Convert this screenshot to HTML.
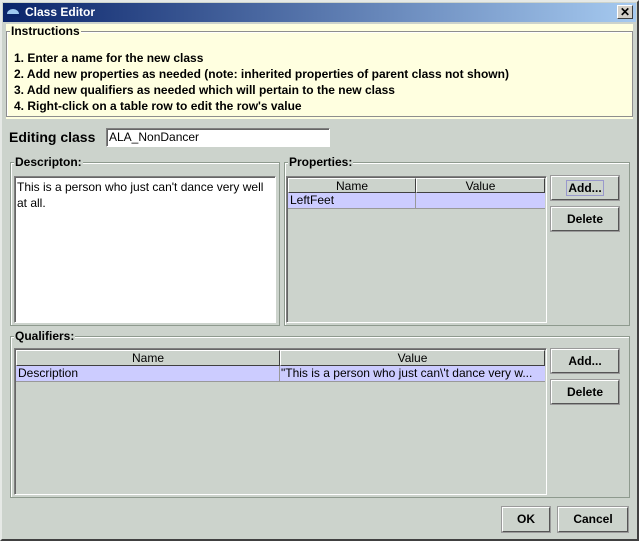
<!DOCTYPE html>
<html><head><style>
*{box-sizing:border-box;margin:0;padding:0}
body{width:639px;height:541px;overflow:hidden;background:#ccd3cc;font-family:"Liberation Sans",sans-serif;font-size:12px;color:#000;position:relative}
.a{position:absolute}
.win{left:0;top:0;width:639px;height:541px;border:2px solid;border-color:#e6e9e6 #404040 #404040 #e6e9e6}
.title{left:3px;top:3px;width:633px;height:19px;background:linear-gradient(90deg,#0a246a,#a6caf0);color:#fff;font-weight:bold;font-size:12px;line-height:19px;padding-left:22px}
.close{left:617px;top:5px;width:16px;height:14px;background:#d4d0c8;border:1px solid;border-color:#fff #404040 #404040 #fff;font-size:12px;line-height:12px;text-align:center;font-weight:bold;color:#000}
.instr{left:6px;top:24px;width:627px;height:95px;background:#ffffe0}
.grp{border:1px solid #8e9a8e;box-shadow:inset 1px 1px 0 #fff}
.gt{background:inherit;font-weight:bold;font-size:12px;padding:0 1px;line-height:13px}
.b{font-weight:bold;font-size:12px}
.white{background:#fff;border:1px solid;border-color:#808080 #fff #fff #808080;box-shadow:inset 1px 1px 0 #666}
.btn{background:#ccd3cc;border:1px solid;border-color:#fff #555 #555 #fff;box-shadow:0 0 0 1px #9a9a9a;font-weight:bold;font-size:12px;text-align:center}
.hd{background:#ccd3cc;border:1px solid;border-color:#fff #404040 #404040 #fff;text-align:center;font-size:12px;line-height:14px}
.row{background:#ccccff;border-bottom:1px solid #999;font-size:12px;line-height:15px;padding-left:2px}
</style></head><body>
<div class="a win"></div>
<div class="a title">Class Editor</div>
<svg class="a" style="left:6px;top:7px" width="14" height="10"><ellipse cx="7" cy="7" rx="6" ry="5" fill="#9ec8f0"/><rect x="0" y="7" width="14" height="3" fill="#0a246a"/></svg>
<div class="a close">✕</div>
<div class="a instr"></div>
<div class="a grp" style="left:6px;top:31px;width:627px;height:86px;border-color:#8e8e8e"></div>
<div class="a gt" style="left:10px;top:25px;background:#ffffe0">Instructions</div>
<div class="a b" style="left:14px;top:50px;line-height:16px">1. Enter a name for the new class<br>2. Add new properties as needed (note: inherited properties of parent class not shown)<br>3. Add new qualifiers as needed which will pertain to the new class<br>4. Right-click on a table row to edit the row's value</div>
<div class="a b" style="left:9px;top:129px;font-size:14px">Editing class</div>
<div class="a white" style="left:106px;top:128px;width:224px;height:19px;padding-left:2px;line-height:17px;font-size:12px">ALA_NonDancer</div>

<div class="a grp" style="left:10px;top:162px;width:270px;height:164px"></div>
<div class="a gt" style="left:14px;top:156px;background:#ccd3cc">Descripton:</div>
<div class="a white" style="left:14px;top:176px;width:262px;height:147px;padding:2px 2px;line-height:16px;font-size:12px">This is a person who just can't dance very well at all.</div>

<div class="a grp" style="left:284px;top:162px;width:346px;height:164px"></div>
<div class="a gt" style="left:288px;top:156px;background:#ccd3cc">Properties:</div>
<div class="a white" style="left:286px;top:176px;width:261px;height:147px;background:#ccd3cc"></div>
<div class="a hd" style="left:288px;top:178px;width:128px;height:15px">Name</div>
<div class="a hd" style="left:416px;top:178px;width:129px;height:15px">Value</div>
<div class="a row" style="left:288px;top:193px;width:257px;height:16px">LeftFeet</div>
<div class="a" style="left:415px;top:193px;width:1px;height:16px;background:#999"></div>
<div class="a btn" style="left:551px;top:176px;width:68px;height:24px;line-height:22px"><span style="outline:1px solid #9999cc;padding:0 1px">Add...</span></div>
<div class="a btn" style="left:551px;top:207px;width:68px;height:24px;line-height:22px">Delete</div>

<div class="a grp" style="left:10px;top:336px;width:620px;height:162px"></div>
<div class="a gt" style="left:14px;top:330px;background:#ccd3cc">Qualifiers:</div>
<div class="a white" style="left:14px;top:348px;width:533px;height:147px;background:#ccd3cc"></div>
<div class="a hd" style="left:16px;top:350px;width:264px;height:16px">Name</div>
<div class="a hd" style="left:280px;top:350px;width:265px;height:16px">Value</div>
<div class="a row" style="left:16px;top:366px;width:529px;height:16px">Description</div>
<div class="a" style="left:279px;top:366px;width:1px;height:16px;background:#999"></div>
<div class="a" style="left:281px;top:366px;font-size:12px;line-height:15px;white-space:nowrap">"This is a person who just can\'t dance very w...</div>
<div class="a btn" style="left:551px;top:349px;width:68px;height:24px;line-height:22px">Add...</div>
<div class="a btn" style="left:551px;top:380px;width:68px;height:24px;line-height:22px">Delete</div>

<div class="a btn" style="left:502px;top:507px;width:48px;height:25px;line-height:23px">OK</div>
<div class="a btn" style="left:558px;top:507px;width:70px;height:25px;line-height:23px">Cancel</div>
</body></html>
